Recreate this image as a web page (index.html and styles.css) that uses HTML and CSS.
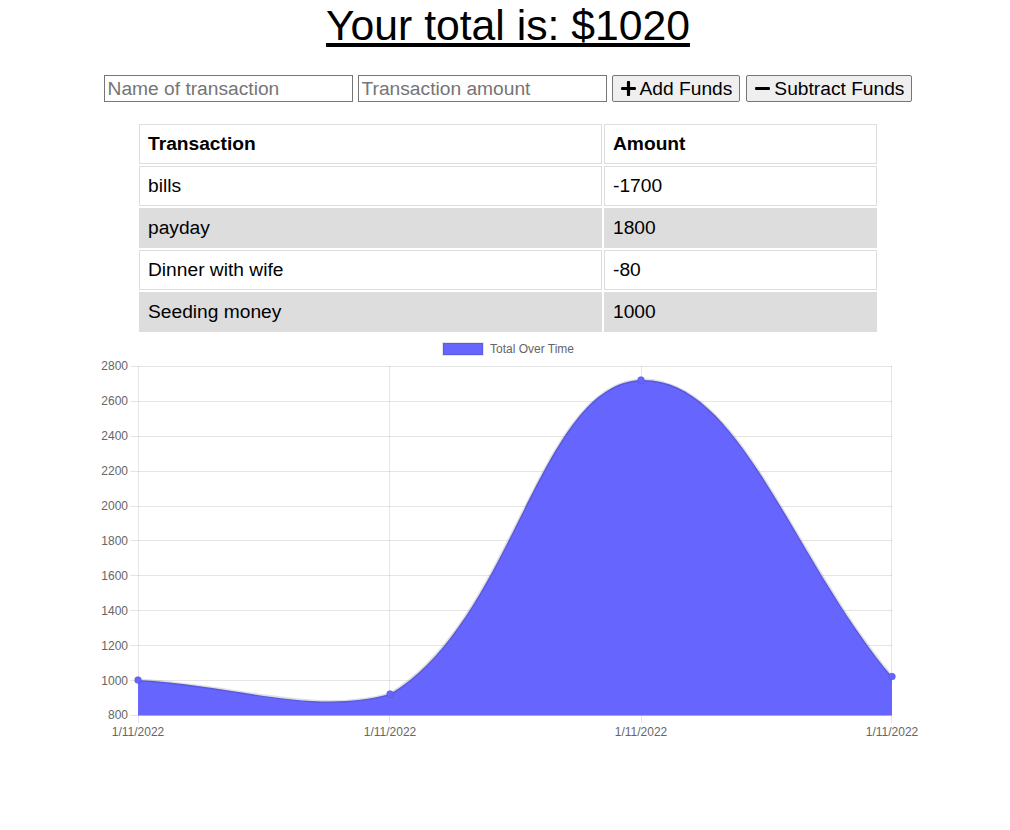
FILE: index.html
```html
<!DOCTYPE html>
<html lang="en">
<head>
    <meta charset="UTF-8">
    <meta name="viewport" content="width=device-width, initial-scale=1.0">
    <title>Budget Tracker</title>
    <link rel="stylesheet" href="styles.css">
</head>
<body>
    <div class="wrapper">
        <h1 class="total">Your total is: $<span id="total">1020</span></h1>

        <div class="form">
            <input type="text" id="t-name" placeholder="Name of transaction">
            <input type="number" id="t-amount" placeholder="Transaction amount">
            <button id="add-btn" class="btn">
                <svg class="icon" viewBox="0 0 448 512"><path d="M416 208H272V64c0-17.670-14.33-32-32-32h-32c-17.67 0-32 14.33-32 32v144H32c-17.67 0-32 14.33-32 32v32c0 17.67 14.33 32 32 32h144v144c0 17.67 14.33 32 32 32h32c17.67 0 32-14.33 32-32V304h144c17.67 0 32-14.33 32-32v-32c0-17.67-14.33-32-32-32z"/></svg>
                Add Funds
            </button>
            <button id="sub-btn" class="btn">
                <svg class="icon" viewBox="0 0 448 512"><path d="M416 208H32c-17.67 0-32 14.33-32 32v32c0 17.67 14.33 32 32 32h384c17.67 0 32-14.33 32-32v-32c0-17.67-14.33-32-32-32z"/></svg>
                Subtract Funds
            </button>
        </div>

        <!-- Transactions -->
        <table class="transactions">
            <thead>
                <tr>
                    <th class="col-name">Transaction</th>
                    <th>Amount</th>
                </tr>
            </thead>
            <tbody id="tbody">
                <tr><td>bills</td><td>-1700</td></tr>
                <tr><td>payday</td><td>1800</td></tr>
                <tr><td>Dinner with wife</td><td>-80</td></tr>
                <tr><td>Seeding money</td><td>1000</td></tr>
            </tbody>
        </table>

        <!-- Total Over Time chart -->
        <svg class="chart" width="840" height="416" viewBox="88 334 840 416">
            <rect class="legend-box" x="443" y="343" width="40" height="12"/>
            <text class="legend-text" x="490" y="350">Total Over Time</text>

            <g class="grid">
                <line x1="130" y1="366.5" x2="892" y2="366.5"/>
                <line x1="130" y1="401.5" x2="892" y2="401.5"/>
                <line x1="130" y1="436.5" x2="892" y2="436.5"/>
                <line x1="130" y1="471.5" x2="892" y2="471.5"/>
                <line x1="130" y1="506.5" x2="892" y2="506.5"/>
                <line x1="130" y1="540.5" x2="892" y2="540.5"/>
                <line x1="130" y1="575.5" x2="892" y2="575.5"/>
                <line x1="130" y1="610.5" x2="892" y2="610.5"/>
                <line x1="130" y1="645.5" x2="892" y2="645.5"/>
                <line x1="130" y1="680.5" x2="892" y2="680.5"/>
                <line x1="130" y1="715.5" x2="892" y2="715.5"/>
                <line x1="138.5" y1="366" x2="138.5" y2="723"/>
                <line x1="389.5" y1="366" x2="389.5" y2="723"/>
                <line x1="641.5" y1="366" x2="641.5" y2="723"/>
                <line x1="891.5" y1="366" x2="891.5" y2="723"/>
            </g>

            <g class="y-ticks">
                <text x="128" y="367">2800</text>
                <text x="128" y="402">2600</text>
                <text x="128" y="437">2400</text>
                <text x="128" y="472">2200</text>
                <text x="128" y="507">2000</text>
                <text x="128" y="542">1800</text>
                <text x="128" y="577">1600</text>
                <text x="128" y="612">1400</text>
                <text x="128" y="647">1200</text>
                <text x="128" y="682">1000</text>
                <text x="128" y="716">800</text>
            </g>

            <g class="x-ticks">
                <text x="138" y="733">1/11/2022</text>
                <text x="390" y="733">1/11/2022</text>
                <text x="641" y="733">1/11/2022</text>
                <text x="892" y="733">1/11/2022</text>
            </g>

            <path class="area" d="M138,680.1 C238.8,685.7 312.4,715 390,694.1 C513.6,620.3 538.9,383.5 641,380 C739.7,376.5 791.6,558 892,676.6 L892,715.5 L138,715.5 Z"/>
            <path class="line" d="M138,680.1 C238.8,685.7 312.4,715 390,694.1 C513.6,620.3 538.9,383.5 641,380 C739.7,376.5 791.6,558 892,676.6"/>

            <g class="points">
                <circle cx="138" cy="680.1" r="3.5"/>
                <circle cx="390" cy="694.1" r="3.5"/>
                <circle cx="641" cy="380" r="3.5"/>
                <circle cx="892" cy="676.6" r="3.5"/>
            </g>
        </svg>
    </div>
</body>
</html>
```

FILE: styles.css
```css
body {
    font-family: "Liberation Sans", Arial, sans-serif;
    font-size: 19.2px;
    margin: 0;
    background-color: #fff;
    color: #000;
}
.wrapper {
    padding: 1px 0 0 6px;
}
.total {
    margin: 0;
    text-align: center;
    font-size: 42.7px;
    font-weight: normal;
    line-height: 48px;
    text-decoration: underline;
}
.form {
    display: flex;
    justify-content: center;
    gap: 5px;
    margin-top: 26px;
    height: 27px;
}
input[type="text"], input[type="number"] {
    width: 249px;
    height: 27px;
    box-sizing: border-box;
    padding: 1px 3px;
    border: 1px solid #767676;
    border-radius: 0;
    font-family: inherit;
    font-size: 19.2px;
    color: #000;
    -moz-appearance: textfield;
}
input::placeholder {
    color: #757575;
}
input::-webkit-inner-spin-button {
    -webkit-appearance: none;
}
.btn {
    display: flex;
    align-items: center;
    gap: 4px;
    height: 27px;
    box-sizing: border-box;
    padding: 0 7px 0 8px;
    border: 1px solid #767676;
    border-radius: 2px;
    background-color: #efefef;
    font-family: inherit;
    font-size: 19.2px;
    color: #000;
    cursor: pointer;
}
#sub-btn {
    margin-left: 1px;
}
.icon {
    width: 15px;
    height: 17px;
    fill: #000;
}
.transactions {
    width: 742px;
    margin: 20px auto 0;
    border-collapse: separate;
    border-spacing: 2px;
    text-align: left;
}
.transactions th, .transactions td {
    box-sizing: border-box;
    height: 40px;
    padding: 8px;
    border: 1px solid #ddd;
    line-height: 22px;
}
.transactions th {
    font-weight: bold;
}
.transactions .col-name {
    width: 463px;
}
.transactions tbody tr:nth-child(even) td {
    background-color: #ddd;
}
.chart {
    display: block;
    margin: 0 auto;
    font-family: "Liberation Sans", Arial, sans-serif;
    font-size: 12px;
}
.legend-box {
    fill: #6666ff;
    stroke: rgba(0, 0, 0, 0.1);
    stroke-width: 2;
}
.legend-text {
    fill: #666;
    dominant-baseline: middle;
}
.grid line {
    stroke: rgba(0, 0, 0, 0.1);
    stroke-width: 1;
}
.y-ticks text {
    fill: #666;
    text-anchor: end;
    dominant-baseline: middle;
}
.x-ticks text {
    fill: #666;
    text-anchor: middle;
    dominant-baseline: middle;
}
.area {
    fill: #6666ff;
}
.line {
    fill: none;
    stroke: rgba(0, 0, 0, 0.12);
    stroke-width: 3;
}
.points circle {
    fill: #6666ff;
    stroke: rgba(0, 0, 0, 0.1);
    stroke-width: 1;
}
```
